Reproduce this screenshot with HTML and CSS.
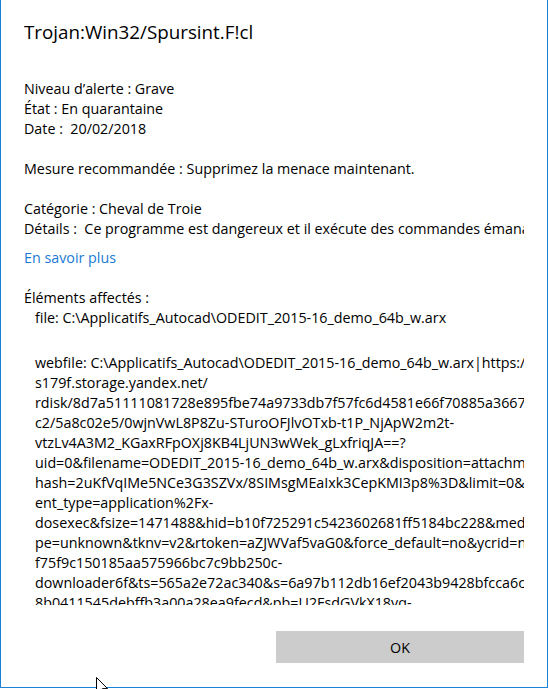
FILE: index.html
```html
<!DOCTYPE html>
<html lang="fr">
<head>
  <meta charset="UTF-8">
  <meta name="viewport" content="width=device-width, initial-scale=1.0">
  <title>Détails de la menace</title>
  <link rel="stylesheet" href="styles.css">
</head>
<body>
  <div class="dialog">
    <div class="scroll">
      <h1 class="title">Trojan:Win32/Spursint.F!cl</h1>

      <p class="group first">
        Niveau d’alerte : Grave<br>
        État : En quarantaine<br>
        Date :&nbsp; 20/02/2018
      </p>

      <p class="group">Mesure recommandée : Supprimez la menace maintenant.</p>

      <p class="group">
        Catégorie : Cheval de Troie<br>
        Détails :&nbsp; Ce programme est dangereux et il exécute des commandes émanant d’un pirate.
      </p>

      <a class="more" href="#">En savoir plus</a>

      <p class="group">Éléments affectés :</p>
      <div class="item">file: C:\Applicatifs_Autocad\ODEDIT_2015-16_demo_64b_w.arx</div>
      <div class="item web">
        webfile: C:\Applicatifs_Autocad\ODEDIT_2015-16_demo_64b_w.arx|https://<br>
        s179f.storage.yandex.net/<br>
        rdisk/8d7a51111081728e895fbe74a9733db7f57fc6d4581e66f70885a36670e3d79a<br>
        c2/5a8c02e5/0wjnVwL8P8Zu-STuroOFJlvOTxb-t1P_NjApW2m2t-<br>
        vtzLv4A3M2_KGaxRFpOXj8KB4LjUN3wWek_gLxfriqJA==?<br>
        uid=0&amp;filename=ODEDIT_2015-16_demo_64b_w.arx&amp;disposition=attachment&amp;<br>
        hash=2uKfVqIMe5NCe3G3SZVx/8SIMsgMEaIxk3CepKMI3p8%3D&amp;limit=0&amp;cont<br>
        ent_type=application%2Fx-<br>
        dosexec&amp;fsize=1471488&amp;hid=b10f725291c5423602681ff5184bc228&amp;media_ty<br>
        pe=unknown&amp;tknv=v2&amp;rtoken=aZJWVaf5vaG0&amp;force_default=no&amp;ycrid=na-<br>
        f75f9c150185aa575966bc7c9bb250c-<br>
        downloader6f&amp;ts=565a2e72ac340&amp;s=6a97b112db16ef2043b9428bfcca6c0e<br>
        8b0411545debffb3a00a28ea9fecd&amp;pb=U2FsdGVkX18vq-<br>
        4n2b7sWkCuLxtJ0KVf3aQm9ZrYH1e
      </div>
    </div>

    <div class="footer">
      <button class="ok-btn">OK</button>
    </div>
  </div>

  <svg class="cursor" width="13" height="18" viewBox="0 0 13 18">
    <path d="M0.5 0.5 L0.5 16 L4.3 12.4 L6.8 17.5 L8.8 16.6 L6.4 11.6 L11.5 11.6 Z" fill="#fff" stroke="#000" stroke-width="1"/>
  </svg>
</body>
</html>
```

FILE: styles.css
```css
body {
  margin: 0;
  background-color: #fff;
  font-family: 'Open Sans', 'Noto Sans', sans-serif;
  color: #000;
}

.dialog {
  width: 548px;
  height: 688px;
  box-sizing: border-box;
  border: 1px solid #1883d7;
  border-top: none;
  display: flex;
  flex-direction: column;
}

.scroll {
  height: 605px;
  margin: 0 23px;
  overflow: hidden;
  font-size: 14.3px;
  line-height: 20px;
  white-space: nowrap;
}

.title {
  margin: 19px 0 0;
  font-size: 18.8px;
  line-height: 26px;
  font-weight: normal;
}

.group {
  margin: 20px 0 0;
}

.group.first {
  margin-top: 34px;
}

.more {
  display: block;
  margin-top: 9px;
  color: #1a7ad4;
  text-decoration: none;
}

.item {
  padding-left: 11px;
}

.item.web {
  margin-top: 25px;
}

.footer {
  display: flex;
  justify-content: flex-end;
  padding: 26px 23px 0;
}

.ok-btn {
  width: 248px;
  height: 32px;
  border: none;
  background-color: #cccccc;
  font-family: 'Open Sans', 'Noto Sans', sans-serif;
  font-size: 14.3px;
  color: #000;
}

.cursor {
  position: absolute;
  left: 96px;
  top: 677px;
}
```
